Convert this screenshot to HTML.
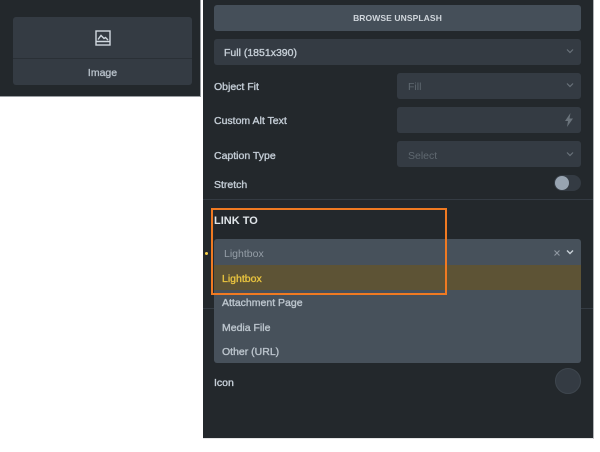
<!DOCTYPE html>
<html><head><meta charset="utf-8"><style>
html,body{margin:0;padding:0;background:#fff}
body{width:600px;height:452px;position:relative;overflow:hidden;font-family:"Liberation Sans",sans-serif;font-size:10.5px;font-weight:400;-webkit-text-stroke:.35px}
div{position:absolute;box-sizing:border-box}
svg{position:absolute}
.sel{background:#343b43;border-radius:3px;height:26px}
.lb{color:#c3ccd5;left:214px;line-height:14px;white-space:nowrap}
.t{line-height:14px;white-space:nowrap}
.n{-webkit-text-stroke:0}
</style></head><body>
<div style="left:0;top:0;width:201px;height:97px;background:#23282c;border-right:1px solid #9a9ea2;border-bottom:1px solid #9a9ea2"></div>
<div style="left:13px;top:17px;width:179px;height:68px;background:#343b43;border-radius:3px"></div>
<div style="left:13px;top:58px;width:179px;height:1px;background:#2a3036"></div>
<svg style="left:95px;top:30px" width="16" height="16" viewBox="0 0 16 16" fill="none" stroke="#d0d8df" stroke-width="1.400"><rect x="1" y="1" width="14" height="14"/><path d="M3 9.500 6 5.500l3 3 1.500-1 2.500 2.500M1 11.500h14"/></svg>
<div class="t" style="left:13px;top:66px;width:179px;text-align:center;color:#b5bec7">Image</div>

<div style="left:203px;top:0;width:391px;height:439px;background:#23282c;border-right:1px solid #b0b3b6;border-bottom:1px solid #e4e5e6"></div>
<div style="left:214px;top:5px;width:367px;height:26px;background:#454f59;border-radius:3px;text-align:center;line-height:27px;color:#d0d6dc;font-size:8.500px;font-weight:700;-webkit-text-stroke:0;letter-spacing:.1px">BROWSE UNSPLASH</div>
<div class="sel" style="left:214px;top:39px;width:367px"></div>
<div class="t" style="left:224px;top:46px;color:#c6cfd7">Full (1851x390)</div>
<div class="lb" style="top:80px">Object Fit</div>
<div class="sel" style="left:397px;top:73px;width:184px"></div>
<div class="t n" style="left:408px;top:80px;color:#5f6870">Fill</div>
<div class="lb" style="top:114px">Custom Alt Text</div>
<div class="sel" style="left:397px;top:107px;width:184px"></div>
<svg style="left:564px;top:113px" width="10" height="14" viewBox="0 0 10 14"><path d="M6.500 0 1 8h3l-1 6 6-8.500H5.500z" fill="#6a737b"/></svg>
<div class="lb" style="top:149px">Caption Type</div>
<div class="sel" style="left:397px;top:141px;width:184px"></div>
<div class="t n" style="left:408px;top:149px;color:#5f6870">Select</div>
<svg style="left:566px;top:48px" width="8" height="6" viewBox="0 0 8 6" fill="none" stroke="#69727a" stroke-width="1.200"><path d="M1 1.500 4 4.500 7 1.500"/></svg>
<svg style="left:566px;top:82px" width="8" height="6" viewBox="0 0 8 6" fill="none" stroke="#69727a" stroke-width="1.200"><path d="M1 1.500 4 4.500 7 1.500"/></svg>
<svg style="left:566px;top:151px" width="8" height="6" viewBox="0 0 8 6" fill="none" stroke="#69727a" stroke-width="1.200"><path d="M1 1.500 4 4.500 7 1.500"/></svg>
<div class="lb" style="top:178px">Stretch</div>
<div style="left:554px;top:175px;width:27px;height:16px;border-radius:8px;background:#343b43"></div>
<div style="left:555px;top:176px;width:14px;height:14px;border-radius:50%;background:#98a4b1"></div>
<div style="left:203px;top:199px;width:390px;height:1px;background:#343b43"></div>
<div style="left:581px;top:308px;width:12px;height:1px;background:#343b43"></div>
<div style="left:203px;top:308px;width:11px;height:1px;background:#343b43"></div>
<div class="t" style="left:214px;top:214px;color:#e1e6ea;font-size:11px;font-weight:700;-webkit-text-stroke:0">LINK TO</div>
<div style="left:205px;top:252px;width:3px;height:3px;border-radius:50%;background:#f5d04a"></div>
<div style="left:214px;top:239px;width:367px;height:124px;background:#47515b;border-radius:3px"></div>
<div style="left:214px;top:265px;width:367px;height:25px;background:#5d5335"></div>
<div class="t n" style="left:224px;top:247px;color:#959ea7">Lightbox</div>
<div class="t" style="left:222px;top:272px;color:#e8c33f">Lightbox</div>
<div class="t" style="left:222px;top:296px;color:#bcc5cd">Attachment Page</div>
<div class="t" style="left:222px;top:321px;color:#bcc5cd">Media File</div>
<div class="t" style="left:222px;top:345px;color:#bcc5cd">Other (URL)</div>
<svg style="left:553px;top:249px" width="8" height="8" viewBox="0 0 8 8" fill="none" stroke="#8f98a1" stroke-width="1.100"><path d="M1.500 1.500l5 5M6.500 1.500l-5 5"/></svg>
<svg style="left:566px;top:249px" width="8" height="7" viewBox="0 0 8 7" fill="none" stroke="#c8d0d7" stroke-width="1.400"><path d="M1 1.500 4 4.500 7 1.500"/></svg>
<div style="left:211px;top:208px;width:236px;height:87px;border:2px solid #f07a22"></div>
<div class="lb" style="top:376px;color:#c8d1da">Icon</div>
<div style="left:555px;top:368px;width:26px;height:26px;border-radius:50%;background:#343b43;border:1px solid #3e464e"></div>
</body></html>
